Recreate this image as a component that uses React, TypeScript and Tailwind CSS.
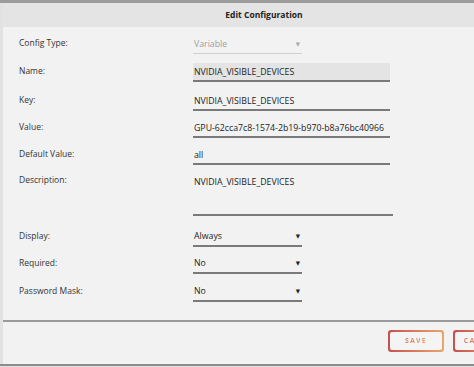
import React from "react";

const font = { fontFamily: "'Open Sans', 'DejaVu Sans', sans-serif" };

function Label({ children }: { children: React.ReactNode }) {
  return <div className="w-[190px] shrink-0 pl-[16px] leading-[16px] text-[#333] whitespace-nowrap">{children}</div>;
}

function TextField({ value, filled }: { value: string; filled?: boolean }) {
  return (
    <div
      className={`w-[197px] h-[19px] border-b-2 border-[#7a7a7a] leading-[18px] pl-[1px] text-[8.75px] text-[#222] whitespace-nowrap ${
        filled ? "bg-[#e4e4e4]" : ""
      }`}
    >
      {value}
    </div>
  );
}

function Select({ value, disabled }: { value: string; disabled?: boolean }) {
  return (
    <div
      className={`w-[109px] h-[19px] flex items-center justify-between pl-[1px] pr-[2px] leading-[18px] text-[8.75px] ${
        disabled ? "border-b border-[#cfcfcf] text-[#a0a0a0]" : "border-b-2 border-[#7a7a7a] text-[#222]"
      }`}
    >
      <span>{value}</span>
      <span className={`text-[5.5px] ${disabled ? "text-[#aaa]" : "text-[#222]"}`}>▼</span>
    </div>
  );
}

function Row({ label, children, h = "h-[27.5px]" }: { label: string; children: React.ReactNode; h?: string }) {
  return (
    <div className={`flex items-start ${h}`}>
      <Label>{label}</Label>
      {children}
    </div>
  );
}

function GradientButton({ label }: { label: string }) {
  return (
    <div className="w-[56px] h-[22px] shrink-0 rounded-[3px] p-[2px] bg-gradient-to-r from-[#c64f4f] to-[#eca56c]">
      <div className="w-full h-full rounded-[2px] bg-[#f4f4f4] flex items-center justify-center">
        <span className="text-[7px] font-bold tracking-[1.2px] bg-gradient-to-r from-[#d47e66] to-[#e6a46e] bg-clip-text text-transparent">
          {label}
        </span>
      </div>
    </div>
  );
}

export default function App() {
  return (
    <div
      className="w-[474px] h-[367px] overflow-hidden bg-[#e2e2e2] border-t-[3px] border-[#9c9c9c] text-[8.5px]"
      style={font}
    >
      <div className="ml-[3px] w-[522px] bg-[#f2f2f2]">
        {/* Header */}
        <div className="h-[24px] bg-[#e4e4e4] flex items-center justify-center font-bold text-[#222]">
          Edit Configuration
        </div>

        {/* Fields */}
        <div className="pt-[8px] pb-[10px]">
          <Row label="Config Type:">
            <Select value="Variable" disabled />
          </Row>
          <Row label="Name:" h="h-[29px]">
            <TextField value="NVIDIA_VISIBLE_DEVICES" filled />
          </Row>
          <Row label="Key:" h="h-[27px]">
            <TextField value="NVIDIA_VISIBLE_DEVICES" />
          </Row>
          <Row label="Value:" h="h-[27px]">
            <TextField value="GPU-62cca7c8-1574-2b19-b970-b8a76bc40966" />
          </Row>
          <Row label="Default Value:" h="h-[26px]">
            <TextField value="all" />
          </Row>
          <Row label="Description:" h="h-[56px]">
            <div className="w-[200px] h-[44px] border-b-2 border-[#7a7a7a] leading-[20px] pl-[1px] text-[8.75px] text-[#222]">
              NVIDIA_VISIBLE_DEVICES
            </div>
          </Row>
          <Row label="Display:" h="h-[27px]">
            <Select value="Always" />
          </Row>
          <Row label="Required:" h="h-[28px]">
            <Select value="No" />
          </Row>
          <Row label="Password Mask:">
            <Select value="No" />
          </Row>
        </div>

        {/* Footer */}
        <div className="h-[44px] border-t-2 border-[#9a9a9a] flex justify-end items-start pt-[8px] pr-[16px] gap-[9px]">
          <GradientButton label="SAVE" />
          <GradientButton label="CANCEL" />
        </div>
      </div>
      <div className="h-[2px] bg-[#8c8c8c]" />
    </div>
  );
}
